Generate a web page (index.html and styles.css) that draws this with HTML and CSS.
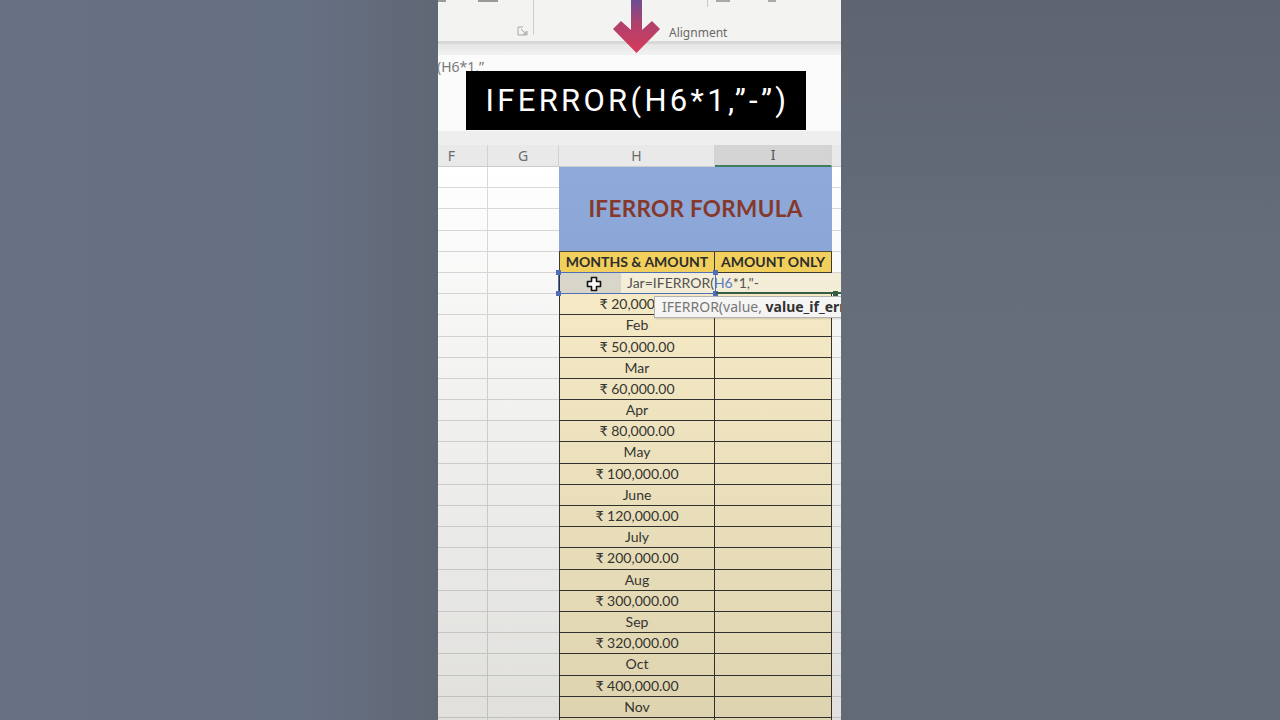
FILE: index.html
```html
<!DOCTYPE html>
<html>
<head>
<meta charset="utf-8">
<link rel="stylesheet" href="styles.css">
</head>
<body>
<div class="page">
  <div class="side side-left"></div>
  <div class="frame">
    <div class="ribbon">
      <div class="grp1">
        <div class="stubs">
          <span class="stub s1"></span><span class="stub s2"></span>
        </div>
        <svg class="launcher" width="11" height="10" viewBox="0 0 11 10">
          <path d="M1 1 H6 M1 1 V9 H10 V5" fill="none" stroke="#a8a8a8" stroke-width="1"/>
          <path d="M4 3 L9 8 M9 5 V8 H6" fill="none" stroke="#a8a8a8" stroke-width="1"/>
        </svg>
      </div>
      <div class="sep"></div>
      <div class="grp2">
        <div class="stubs">
          <span class="sep2"></span><span class="stub s3"></span><span class="stub s4"></span>
        </div>
        <div class="label">Alignment</div>
      </div>
    </div>
    <div class="band"></div>
    <div class="band2"></div>
    <div class="formula"><span class="ftext">(H6*1,”</span></div>
    <div class="gap"></div>
    <div class="colheads">
      <div class="ch">F</div>
      <div class="ch">G</div>
      <div class="ch">H</div>
      <div class="ch sel">I</div>
      <div class="ch last"></div>
    </div>
    <div class="grid">
      <div class="c"></div><div class="c g"></div><div class="title">IFERROR FORMULA</div><div class="c j"></div>
      <div class="c"></div><div class="c g"></div><div class="c j"></div>
      <div class="c"></div><div class="c g"></div><div class="c j"></div>
      <div class="c"></div><div class="c g"></div><div class="c j"></div>
      <div class="c"></div><div class="c g"></div><div class="hd hd1">MONTHS &amp; AMOUNT</div><div class="hd hd2">AMOUNT ONLY</div><div class="c j"></div>
      <div class="c"></div><div class="c g"></div>
      <div class="h edit">
        <svg class="cursor" width="16" height="16" viewBox="0 0 16 16">
          <path d="M5.5 1.5 H10.5 V5.5 H14.5 V10.5 H10.5 V14.5 H5.5 V10.5 H1.5 V5.5 H5.5 Z" fill="#ffffff" stroke="#111" stroke-width="1.6" stroke-linejoin="round"/>
        </svg>
        <div class="editor">Jar=IFERROR(<span class="ref">H6</span>*1,"-</div>
        <div class="selbox">
          <span class="hdl tl"></span><span class="hdl tr"></span><span class="hdl bl"></span><span class="hdl br"></span>
        </div>
        <div class="activeline"><span class="hdl gr"></span></div>
        <div class="tip">IFERROR(value, <b>value_if_error</b>)</div>
      </div>
      <div class="i"></div><div class="c j"></div>
      <div class="c"></div><div class="c g"></div><div class="h">₹ 20,000.00</div><div class="i"></div><div class="c j"></div>
      <div class="c"></div><div class="c g"></div><div class="h">Feb</div><div class="i"></div><div class="c j"></div>
      <div class="c"></div><div class="c g"></div><div class="h">₹ 50,000.00</div><div class="i"></div><div class="c j"></div>
      <div class="c"></div><div class="c g"></div><div class="h">Mar</div><div class="i"></div><div class="c j"></div>
      <div class="c"></div><div class="c g"></div><div class="h">₹ 60,000.00</div><div class="i"></div><div class="c j"></div>
      <div class="c"></div><div class="c g"></div><div class="h">Apr</div><div class="i"></div><div class="c j"></div>
      <div class="c"></div><div class="c g"></div><div class="h">₹ 80,000.00</div><div class="i"></div><div class="c j"></div>
      <div class="c"></div><div class="c g"></div><div class="h">May</div><div class="i"></div><div class="c j"></div>
      <div class="c"></div><div class="c g"></div><div class="h">₹ 100,000.00</div><div class="i"></div><div class="c j"></div>
      <div class="c"></div><div class="c g"></div><div class="h">June</div><div class="i"></div><div class="c j"></div>
      <div class="c"></div><div class="c g"></div><div class="h">₹ 120,000.00</div><div class="i"></div><div class="c j"></div>
      <div class="c"></div><div class="c g"></div><div class="h">July</div><div class="i"></div><div class="c j"></div>
      <div class="c"></div><div class="c g"></div><div class="h">₹ 200,000.00</div><div class="i"></div><div class="c j"></div>
      <div class="c"></div><div class="c g"></div><div class="h">Aug</div><div class="i"></div><div class="c j"></div>
      <div class="c"></div><div class="c g"></div><div class="h">₹ 300,000.00</div><div class="i"></div><div class="c j"></div>
      <div class="c"></div><div class="c g"></div><div class="h">Sep</div><div class="i"></div><div class="c j"></div>
      <div class="c"></div><div class="c g"></div><div class="h">₹ 320,000.00</div><div class="i"></div><div class="c j"></div>
      <div class="c"></div><div class="c g"></div><div class="h">Oct</div><div class="i"></div><div class="c j"></div>
      <div class="c"></div><div class="c g"></div><div class="h">₹ 400,000.00</div><div class="i"></div><div class="c j"></div>
      <div class="c"></div><div class="c g"></div><div class="h">Nov</div><div class="i"></div><div class="c j"></div>
      <div class="c"></div><div class="c g"></div><div class="h"></div><div class="i"></div><div class="c j"></div>
    </div>
    <svg class="arrow" width="50" height="56" viewBox="0 0 50 56">
      <defs>
        <linearGradient id="ag" x1="0" y1="0" x2="0" y2="1">
          <stop offset="0" stop-color="#6d4f93"/>
          <stop offset="0.45" stop-color="#b0406e"/>
          <stop offset="1" stop-color="#d63b59"/>
        </linearGradient>
      </defs>
      <path d="M19 0 H30 V30 L40 21 L48 29 L24.5 53 L1 29 L9 21 L19 30 Z" fill="url(#ag)"/>
    </svg>
    <div class="caption">IFERROR(H6*1,”-”)</div>
  </div>
  <div class="side side-right"></div>
</div>
</body>
</html>
```

FILE: styles.css
```css
* { box-sizing: border-box; }
html, body { margin: 0; padding: 0; }
body { width: 1280px; height: 720px; overflow: hidden; font-family: "Noto Sans", sans-serif; }
.page { display: flex; width: 1280px; height: 720px; }
.side-left { width: 438px; flex-shrink: 0; background: linear-gradient(to right, #687184 0%, #667083 70%, #606774 100%); }
.side-right { width: 439px; flex-shrink: 0; background: linear-gradient(to bottom, #5e6570 0%, #656c7a 35%, #666d7b 60%, #636a77 100%); }
.frame { width: 403px; height: 720px; flex-shrink: 0; position: relative; overflow: hidden; background: #fff; display: flex; flex-direction: column; }

.ribbon { height: 41px; background: #f3f3f1; display: flex; flex-shrink: 0; }
.grp1 { width: 95px; display: flex; flex-direction: column; justify-content: space-between; align-items: flex-end; padding-right: 5px; padding-bottom: 5px; }
.grp1 .stubs { align-self: stretch; }
.stubs { display: flex; height: 3px; }
.stub { display: block; height: 2px; background: #9a9a9a; }
.s1 { width: 8px; }
.s2 { width: 20px; margin-left: 32px; }
.sep { width: 1px; height: 35px; background: #cfcfcf; }
.grp2 { flex: 1; display: flex; flex-direction: column; justify-content: space-between; }
.grp2 .stubs { height: 7px; }
.sep2 { display: block; width: 1px; height: 7px; background: #c8c8c8; margin-left: 173px; }
.s3 { width: 14px; margin-left: 8px; background: #a8a8a8; }
.s4 { width: 8px; margin-left: 38px; background: #a8a8a8; }
.label { margin-left: 135px; margin-bottom: 0; font-size: 12px; line-height: 16px; color: #6a6a6a; font-family: "Noto Sans", sans-serif; }

.band { height: 3px; background: #d8d8d8; flex-shrink: 0; }
.band2 { height: 11px; background: linear-gradient(to bottom, #e6e6e6, #f2f2f2); flex-shrink: 0; }
.formula { height: 76px; background: #fbfbfb; padding-top: 4px; flex-shrink: 0; }
.ftext { display: block; margin-left: -1px; font-size: 14px; line-height: 16px; color: #7a7a7a; }
.gap { height: 14px; background: #eeeeee; flex-shrink: 0; }

.colheads { height: 22px; margin-left: -22px; display: grid; grid-template-columns: 72px 71px 156px 117px 9px; background: #e9e9e9; border-bottom: 1px solid #cccccc; flex-shrink: 0; }
.ch { border-right: 1px solid #d2d2d2; text-align: center; font-size: 14px; line-height: 21px; color: #6c6c6c; font-family: "Noto Sans", sans-serif; }
.ch.sel { background: #d4d4d4; border-bottom: 2px solid #3f7d5c; line-height: 20px; color: #555; }
.ch.last { border-right: none; }

.grid { position: relative; margin-left: -22px; display: grid; grid-template-columns: 72px 71px 156px 117px 9px; grid-auto-rows: 21.2px; font-family: "Lato", "Noto Sans", sans-serif; font-size: 14px; color: #363636; }
.grid::after { content: ""; position: absolute; inset: 0; background: linear-gradient(to bottom, rgba(0,0,0,0) 0%, rgba(30,25,0,0.06) 40%, rgba(30,25,0,0.14) 100%); pointer-events: none; z-index: 5; }
.c { background: #fff; border-right: 1px solid #dadada; border-bottom: 1px solid #dadada; }
.c.g { border-right: none; }
.c.j { border-right: none; }
.title { grid-column: 3 / span 2; grid-row: span 4; background: #8eaadb; display: flex; align-items: center; justify-content: center; font-weight: 700; font-size: 22.5px; color: #87392b; border-bottom: 1px solid #4d4d3a; letter-spacing: 0.3px; }
.hd { background: #f7d45e; border-bottom: 1px solid #3a3a3a; font-weight: 700; font-size: 14px; color: #2e2e2e; display: flex; align-items: center; justify-content: center; }
.hd1 { border-left: 1px solid #3a3a3a; border-right: 1px solid #3a3a3a; }
.hd2 { border-right: 1px solid #3a3a3a; }
.h { background: #fcf1cb; border-left: 1px solid #333; border-right: 1px solid #333; border-bottom: 1px solid #333; text-align: center; line-height: 20px; }
.i { background: #fcf1cb; border-right: 1px solid #333; border-bottom: 1px solid #333; }

.edit { position: relative; background: #dedbcf; z-index: 2; }
.cursor { position: absolute; left: 26px; top: 3px; z-index: 4; }
.editor { position: absolute; left: 61px; top: 0; width: 240px; height: 20px; background: #faf4df; text-align: left; padding-left: 6px; color: #555; line-height: 20px; white-space: nowrap; z-index: 1; }
.ref { color: #5b7ec6; }
.selbox { position: absolute; left: -2px; top: -1px; width: 158px; height: 22px; border: 1px solid #4f72bd; z-index: 3; }
.hdl { position: absolute; width: 5px; height: 5px; background: #4f72bd; }
.tl { left: -3px; top: -3px; }
.tr { right: -3px; top: -3px; }
.bl { left: -3px; bottom: -3px; }
.br { right: -3px; bottom: -3px; }
.activeline { position: absolute; left: 156px; top: 19px; width: 126px; height: 2px; background: #355f45; z-index: 3; }
.gr { right: 4px; top: -1px; background: #355f45; }
.tip { position: absolute; left: 94px; top: 23px; height: 22px; padding: 0 7px; background: #fdfdfd; border: 1px solid #b8b8b8; box-shadow: 1px 1px 2px rgba(0,0,0,0.15); font-family: "Noto Sans", sans-serif; font-size: 14px; line-height: 20px; color: #7a7a7a; white-space: nowrap; z-index: 4; }
.tip b { color: #333; font-weight: 700; }

.arrow { position: absolute; left: 174px; top: 0; z-index: 10; }
.caption { position: absolute; left: 28px; top: 71px; width: 340px; height: 59px; background: #000; color: #fff; font-family: "Roboto", sans-serif; font-size: 31px; letter-spacing: 3.3px; display: flex; align-items: center; justify-content: center; padding-left: 3px; z-index: 10; }
```
